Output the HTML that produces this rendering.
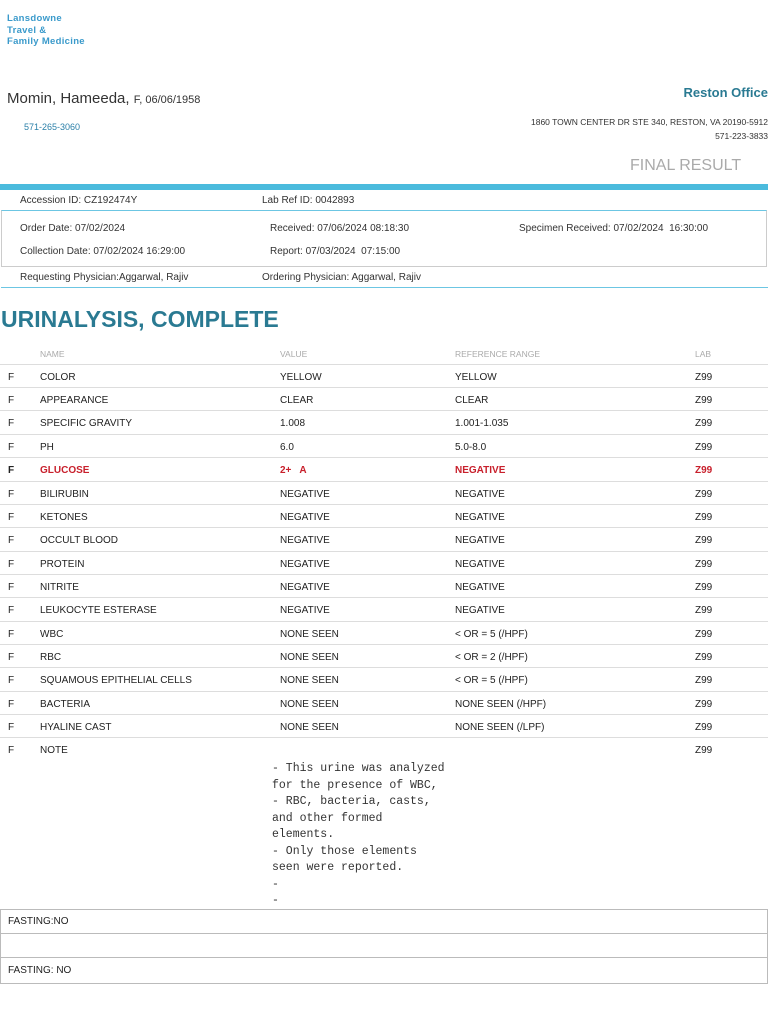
<!DOCTYPE html>
<html><head><style>
body{margin:0;width:768px;height:1024px;position:relative;background:#fff;font-family:"Liberation Sans",sans-serif;color:#222;overflow:hidden}
.a{position:absolute;white-space:nowrap}
.s{font-size:10px;color:#333}
.r{position:absolute;left:0;width:768px;height:23px;font-size:10px;color:#222}
.r span{position:absolute;top:8px}
.ln{position:absolute;left:0;width:768px;height:1px;background:#ddd}
.red{color:#c8202c;font-weight:bold}
</style></head><body>
<div class="a" style="left:7px;top:13px;font-size:9.5px;line-height:11.5px;color:#3a9acb;font-weight:bold;letter-spacing:0.3px">Lansdowne<br>Travel &amp;<br>Family Medicine</div>
<div class="a" style="left:7px;top:90px;font-size:15px;color:#333">Momin, Hameeda, <span style="font-size:11px">F, 06/06/1958</span></div>
<div class="a" style="left:24px;top:122px;font-size:9px;color:#2a7fa8">571-265-3060</div>
<div class="a" style="right:0;top:85px;font-size:13px;font-weight:bold;color:#2a7a92">Reston Office</div>
<div class="a" style="right:0;top:117px;font-size:8.5px;color:#333">1860 TOWN CENTER DR STE 340, RESTON, VA 20190-5912</div>
<div class="a" style="right:0;top:131px;font-size:8.5px;color:#333">571-223-3833</div>
<div class="a" style="left:630px;top:157px;font-size:16px;color:#aaa">FINAL RESULT</div>
<div class="a" style="left:0;top:184px;width:768px;height:6px;background:#4bbbdd"></div>
<div class="a s" style="left:20px;top:195px">Accession ID: CZ192474Y</div>
<div class="a s" style="left:262px;top:195px">Lab Ref ID: 0042893</div>
<div class="a" style="left:1px;top:210px;width:766px;height:57px;border:1px solid #ccc;border-top:1px solid #6cc6e3;box-sizing:border-box"></div>
<div class="a s" style="left:20px;top:223px">Order Date: 07/02/2024</div>
<div class="a s" style="left:270px;top:223px">Received: 07/06/2024 08:18:30</div>
<div class="a s" style="left:519px;top:223px">Specimen Received: 07/02/2024&nbsp; 16:30:00</div>
<div class="a s" style="left:20px;top:246px">Collection Date: 07/02/2024 16:29:00</div>
<div class="a s" style="left:270px;top:246px">Report: 07/03/2024&nbsp; 07:15:00</div>
<div class="a s" style="left:20px;top:272px">Requesting Physician:Aggarwal, Rajiv</div>
<div class="a s" style="left:262px;top:272px">Ordering Physician: Aggarwal, Rajiv</div>
<div class="a" style="left:1px;top:287px;width:767px;height:1px;background:#6cc6e3"></div>
<div class="a" style="left:1px;top:306px;font-size:23px;font-weight:bold;color:#2a7a92">URINALYSIS, COMPLETE</div>
<div class="r" style="top:341px;font-size:8.5px;color:#aaa"><span style="left:40px">NAME</span><span style="left:280px">VALUE</span><span style="left:455px">REFERENCE RANGE</span><span style="left:695px">LAB</span></div>
<div class="ln" style="top:364px"></div>
<div class="r" style="top:364px"><span style="left:8px">F</span><span style="left:40px">COLOR</span><span style="left:280px">YELLOW</span><span style="left:455px">YELLOW</span><span style="left:695px">Z99</span></div><div class="ln" style="top:387px"></div>
<div class="r" style="top:387px"><span style="left:8px">F</span><span style="left:40px">APPEARANCE</span><span style="left:280px">CLEAR</span><span style="left:455px">CLEAR</span><span style="left:695px">Z99</span></div><div class="ln" style="top:410px"></div>
<div class="r" style="top:410px"><span style="left:8px">F</span><span style="left:40px">SPECIFIC GRAVITY</span><span style="left:280px">1.008</span><span style="left:455px">1.001-1.035</span><span style="left:695px">Z99</span></div><div class="ln" style="top:434px"></div>
<div class="r" style="top:434px"><span style="left:8px">F</span><span style="left:40px">PH</span><span style="left:280px">6.0</span><span style="left:455px">5.0-8.0</span><span style="left:695px">Z99</span></div><div class="ln" style="top:457px"></div>
<div class="r" style="top:457px"><span style="left:8px;font-weight:bold">F</span><span class="red" style="left:40px">GLUCOSE</span><span class="red" style="left:280px">2+&nbsp;&nbsp; A</span><span class="red" style="left:455px">NEGATIVE</span><span class="red" style="left:695px">Z99</span></div><div class="ln" style="top:481px"></div>
<div class="r" style="top:481px"><span style="left:8px">F</span><span style="left:40px">BILIRUBIN</span><span style="left:280px">NEGATIVE</span><span style="left:455px">NEGATIVE</span><span style="left:695px">Z99</span></div><div class="ln" style="top:504px"></div>
<div class="r" style="top:504px"><span style="left:8px">F</span><span style="left:40px">KETONES</span><span style="left:280px">NEGATIVE</span><span style="left:455px">NEGATIVE</span><span style="left:695px">Z99</span></div><div class="ln" style="top:527px"></div>
<div class="r" style="top:527px"><span style="left:8px">F</span><span style="left:40px">OCCULT BLOOD</span><span style="left:280px">NEGATIVE</span><span style="left:455px">NEGATIVE</span><span style="left:695px">Z99</span></div><div class="ln" style="top:551px"></div>
<div class="r" style="top:551px"><span style="left:8px">F</span><span style="left:40px">PROTEIN</span><span style="left:280px">NEGATIVE</span><span style="left:455px">NEGATIVE</span><span style="left:695px">Z99</span></div><div class="ln" style="top:574px"></div>
<div class="r" style="top:574px"><span style="left:8px">F</span><span style="left:40px">NITRITE</span><span style="left:280px">NEGATIVE</span><span style="left:455px">NEGATIVE</span><span style="left:695px">Z99</span></div><div class="ln" style="top:597px"></div>
<div class="r" style="top:597px"><span style="left:8px">F</span><span style="left:40px">LEUKOCYTE ESTERASE</span><span style="left:280px">NEGATIVE</span><span style="left:455px">NEGATIVE</span><span style="left:695px">Z99</span></div><div class="ln" style="top:621px"></div>
<div class="r" style="top:621px"><span style="left:8px">F</span><span style="left:40px">WBC</span><span style="left:280px">NONE SEEN</span><span style="left:455px">&lt; OR = 5 (/HPF)</span><span style="left:695px">Z99</span></div><div class="ln" style="top:644px"></div>
<div class="r" style="top:644px"><span style="left:8px">F</span><span style="left:40px">RBC</span><span style="left:280px">NONE SEEN</span><span style="left:455px">&lt; OR = 2 (/HPF)</span><span style="left:695px">Z99</span></div><div class="ln" style="top:667px"></div>
<div class="r" style="top:667px"><span style="left:8px">F</span><span style="left:40px">SQUAMOUS EPITHELIAL CELLS</span><span style="left:280px">NONE SEEN</span><span style="left:455px">&lt; OR = 5 (/HPF)</span><span style="left:695px">Z99</span></div><div class="ln" style="top:691px"></div>
<div class="r" style="top:691px"><span style="left:8px">F</span><span style="left:40px">BACTERIA</span><span style="left:280px">NONE SEEN</span><span style="left:455px">NONE SEEN (/HPF)</span><span style="left:695px">Z99</span></div><div class="ln" style="top:714px"></div>
<div class="r" style="top:714px"><span style="left:8px">F</span><span style="left:40px">HYALINE CAST</span><span style="left:280px">NONE SEEN</span><span style="left:455px">NONE SEEN (/LPF)</span><span style="left:695px">Z99</span></div><div class="ln" style="top:737px"></div>
<div class="r" style="top:737px"><span style="left:8px">F</span><span style="left:40px">NOTE</span><span style="left:695px">Z99</span></div>
<div class="a" style="left:272px;top:761px;font-family:'Liberation Mono',monospace;font-size:11.5px;line-height:16.5px;color:#333;white-space:pre">- This urine was analyzed
for the presence of WBC,
- RBC, bacteria, casts,
and other formed
elements.
- Only those elements
seen were reported.
-
-</div>
<div class="a" style="left:0;top:909px;width:768px;height:75px;border:1px solid #bbb;box-sizing:border-box"></div>
<div class="a" style="left:0;top:933px;width:768px;height:1px;background:#bbb"></div>
<div class="a" style="left:0;top:957px;width:768px;height:1px;background:#bbb"></div>
<div class="a" style="left:8px;top:916px;font-size:10px">FASTING:NO</div>
<div class="a" style="left:8px;top:965px;font-size:10px">FASTING: NO</div>
</body></html>
